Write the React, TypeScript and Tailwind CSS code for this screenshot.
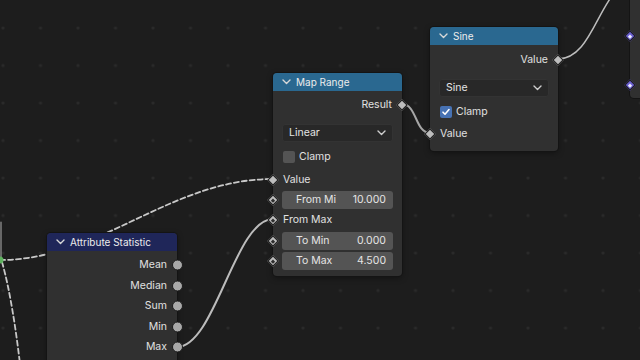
import React from "react";

const Chevron = ({ color = "#d8d8d8" }: { color?: string }) => (
  <svg width="9" height="6" viewBox="0 0 9 6" className="shrink-0">
    <path d="M1 1l3.5 3.5L8 1" fill="none" stroke={color} strokeWidth="1.4" strokeLinecap="round" strokeLinejoin="round" />
  </svg>
);

type SocketKind = "circle" | "diamond" | "hollow";

function Socket({ kind, side }: { kind: SocketKind; side: "in" | "out" }) {
  const pos = side === "in" ? "left-[-6px]" : "right-[-6px]";
  if (kind === "circle") {
    return (
      <span className={`absolute ${pos} top-1/2 -translate-y-1/2 w-[11px] h-[11px] rounded-full bg-[#a8a8a8] border-[1.5px] border-[#1b1b1b]`} />
    );
  }
  return (
    <span className={`absolute ${pos} top-1/2 -translate-y-1/2 w-[12px] h-[12px] flex items-center justify-center`}>
      <span className="w-[8px] h-[8px] rotate-45 bg-[#bdbdbd] border border-[#1b1b1b] flex items-center justify-center">
        {kind === "hollow" && <span className="w-[3px] h-[3px] bg-[#2e2e2e]" />}
      </span>
    </span>
  );
}

function Header({ title, tone }: { title: string; tone: string }) {
  return (
    <div className={`h-[18px] flex items-center gap-[5px] pl-[9px] rounded-t-[4px] ${tone}`}>
      <Chevron />
      <span className="text-[10px] text-[#ececec] leading-none">{title}</span>
    </div>
  );
}

function Row({ label, side, kind, className = "" }: { label: string; side: "in" | "out"; kind: SocketKind; className?: string }) {
  return (
    <div className={`relative h-[20px] flex items-center ${side === "out" ? "justify-end pr-[10px]" : "pl-[10px]"} ${className}`}>
      <span className="text-[10.5px] text-[#e0e0e0] leading-none">{label}</span>
      <Socket kind={kind} side={side} />
    </div>
  );
}

function Field({ label, value, className = "" }: { label: string; value: string; className?: string }) {
  return (
    <div className={`relative h-[20px] flex items-center ${className}`}>
      <div className="mx-[9px] flex-1 h-[18px] rounded-[3px] bg-[#545454] flex items-center justify-between pl-[14px] pr-[7px]">
        <span className="text-[10.5px] text-[#e4e4e4] leading-none">{label}</span>
        <span className="text-[10.5px] text-[#e4e4e4] leading-none">{value}</span>
      </div>
      <Socket kind="hollow" side="in" />
    </div>
  );
}

function Dropdown({ value, className = "" }: { value: string; className?: string }) {
  return (
    <div className={`mx-[9px] h-[18px] rounded-[3px] bg-[#282828] border border-[#333333] flex items-center justify-between pl-[6px] pr-[6px] ${className}`}>
      <span className="text-[10.5px] text-[#e4e4e4] leading-none">{value}</span>
      <Chevron color="#cfcfcf" />
    </div>
  );
}

function Check({ checked, className = "" }: { checked: boolean; className?: string }) {
  return (
    <div className={`h-[20px] flex items-center gap-[4px] pl-[10px] ${className}`}>
      <span className={`w-[12px] h-[12px] rounded-[2px] flex items-center justify-center ${checked ? "bg-[#4772b3]" : "bg-[#545454]"}`}>
        {checked && (
          <svg width="10" height="10" viewBox="0 0 10 10">
            <path d="M2 5.2l2 2L8 2.6" fill="none" stroke="#ffffff" strokeWidth="1.6" strokeLinecap="round" strokeLinejoin="round" />
          </svg>
        )}
      </span>
      <span className="text-[10.5px] text-[#e0e0e0] leading-none">Clamp</span>
    </div>
  );
}

function VectorSocket({ top }: { top: string }) {
  return (
    <span className={`absolute left-[-6px] ${top} w-[12px] h-[12px] flex items-center justify-center`}>
      <span className="w-[8px] h-[8px] rotate-45 bg-[#6a5fd0] border border-[#1b1b1b] flex items-center justify-center">
        <span className="w-[3px] h-[3px] bg-[#ececff]" />
      </span>
    </span>
  );
}

export default function App() {
  return (
    <div
      className="relative w-[640px] h-[360px] overflow-hidden bg-[#1d1d1d]"
      style={{ fontFamily: "Inter, 'DejaVu Sans', sans-serif" }}
    >
      <svg className="absolute inset-0" width="640" height="360">
        <defs>
          <pattern id="grid" patternUnits="userSpaceOnUse" x="-15.75" y="9.25" width="37.5" height="37.5">
            <circle cx="18.75" cy="18.75" r="1.6" fill="#2a2a2a" />
          </pattern>
        </defs>
        <rect width="640" height="360" fill="url(#grid)" />
        <g fill="none" strokeLinecap="round">
          <path d="M0 260 C100 260, 170 179, 273 179" stroke="#c8c8c8" strokeWidth="1.8" strokeDasharray="5 3" />
          <path d="M2 262 C10 290, 16 330, 20 364" stroke="#c8c8c8" strokeWidth="1.8" strokeDasharray="5 3" />
          <path d="M1 222 L1 258" stroke="#9a9a9a" strokeWidth="1.2" />
          <path d="M177 347 C215 347, 235 219, 273 219" stroke="#bcbcbc" strokeWidth="2" />
          <path d="M402 104 C417 104, 415 133, 430 133" stroke="#a6a6a6" strokeWidth="2" />
          <path d="M558 59 C588 59, 596 12, 618 -12" stroke="#bdbdbd" strokeWidth="1.5" />
        </g>
        <circle cx="0" cy="260" r="3.5" fill="#5fb35f" />
      </svg>

      {/* node at right edge */}
      <div className="absolute left-[630px] top-[-4px] w-[40px] h-[102px] rounded-[4px] bg-[#303030] shadow-[0_0_0_1px_#141414]">
        <VectorSocket top="top-[34px]" />
        <VectorSocket top="top-[83px]" />
      </div>

      {/* Map Range */}
      <div className="absolute left-[273px] top-[73px] w-[129px] rounded-[4px] bg-[#303030] shadow-[0_0_0_1px_#141414,0_2px_6px_rgba(0,0,0,0.4)]">
        <Header title="Map Range" tone="bg-[#2a6890]" />
        <div className="flex flex-col pt-[4px] pb-[5px]">
          <Row label="Result" side="out" kind="diamond" />
          <Dropdown value="Linear" className="mt-[9px]" />
          <Check checked={false} className="mt-[5px]" />
          <Row label="Value" side="in" kind="diamond" className="mt-[3px]" />
          <Field label="From Mi" value="10.000" />
          <Row label="From Max" side="in" kind="hollow" />
          <Field label="To Min" value="0.000" className="mt-[1px]" />
          <Field label="To Max" value="4.500" />
        </div>
      </div>

      {/* Sine */}
      <div className="absolute left-[430px] top-[27px] w-[128px] rounded-[4px] bg-[#303030] shadow-[0_0_0_1px_#141414,0_2px_6px_rgba(0,0,0,0.4)]">
        <Header title="Sine" tone="bg-[#2a6890]" />
        <div className="flex flex-col pt-[5px] pb-[7px]">
          <Row label="Value" side="out" kind="diamond" />
          <Dropdown value="Sine" className="mt-[9px]" />
          <Check checked className="mt-[5px]" />
          <Row label="Value" side="in" kind="diamond" className="mt-[2px]" />
        </div>
      </div>

      {/* Attribute Statistic */}
      <div className="absolute left-[47px] top-[233px] w-[130px] h-[140px] rounded-[4px] bg-[#303030] shadow-[0_0_0_1px_#141414,0_2px_6px_rgba(0,0,0,0.4)]">
        <Header title="Attribute Statistic" tone="bg-[#1f2659]" />
        <div className="flex flex-col pt-[4px] [&>div]:h-[20.5px]">
          <Row label="Mean" side="out" kind="circle" />
          <Row label="Median" side="out" kind="circle" />
          <Row label="Sum" side="out" kind="circle" />
          <Row label="Min" side="out" kind="circle" />
          <Row label="Max" side="out" kind="circle" />
        </div>
      </div>
    </div>
  );
}
